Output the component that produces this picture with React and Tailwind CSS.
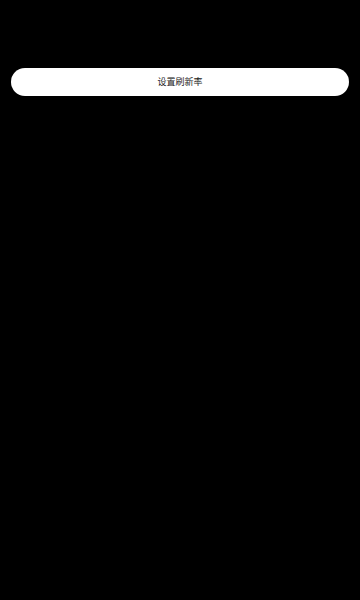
import React from "react";

export default function App() {
  return (
    <div className="w-[360px] h-[600px] bg-black pt-[68px] px-[11px]">
      <button className="w-full h-[28px] rounded-full bg-white flex items-center justify-center text-[9px] text-[#222] font-['Noto_Sans_CJK_SC',sans-serif]">
        设置刷新率
      </button>
    </div>
  );
}
